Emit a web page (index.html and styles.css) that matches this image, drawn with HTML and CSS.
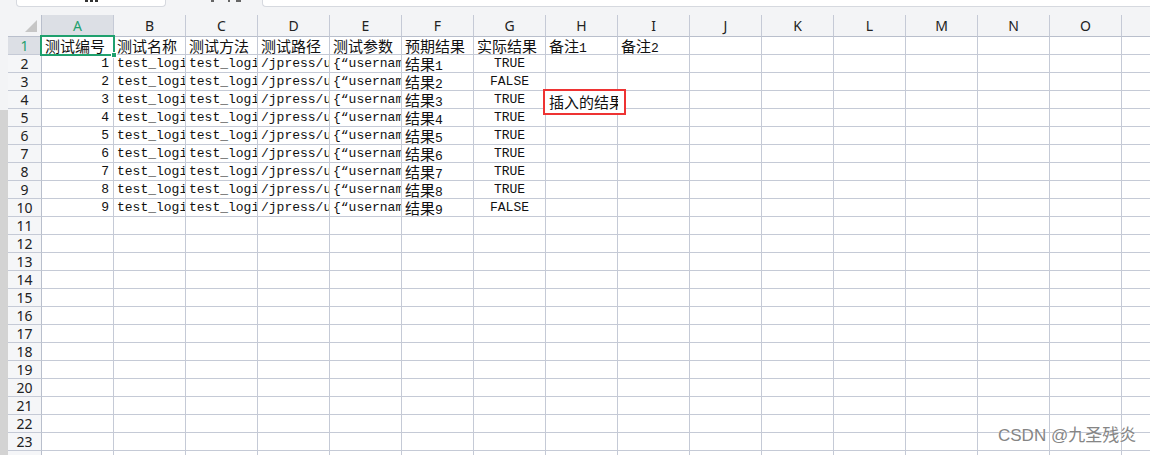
FILE: index.html
```html
<!DOCTYPE html>
<html lang="zh">
<head>
<meta charset="utf-8">
<title>Sheet</title>
<link rel="stylesheet" href="styles.css">
</head>
<body>
<div class="top">
  <div class="namebox"><span class="dot"></span><span class="dot"></span><span class="dot"></span></div>
  <div class="fxarea"><span class="mk mk1"></span><span class="mk mk2"></span><span class="mk mk3"></span></div>
  <div class="formula"></div>
</div>
<div class="main">
  <div class="strip"></div>
  <div class="sheet">
    <div class="gap"></div>
    <div class="row head">
      <div class="rh corner"><span class="tri"></span></div>
      <div class="ch sel">A</div><div class="ch">B</div><div class="ch">C</div><div class="ch">D</div><div class="ch">E</div><div class="ch">F</div><div class="ch">G</div><div class="ch">H</div><div class="ch">I</div><div class="ch">J</div><div class="ch">K</div><div class="ch">L</div><div class="ch">M</div><div class="ch">N</div><div class="ch">O</div><div class="ch fill"></div>
    </div>
    <div class="row">
      <div class="rh sel">1</div>
      <div class="c zh active">测试编号<span class="handle"></span></div><div class="c zh">测试名称</div><div class="c zh">测试方法</div><div class="c zh">测试路径</div><div class="c zh">测试参数</div><div class="c zh">预期结果</div><div class="c zh">实际结果</div><div class="c"><span class="zh">备注</span>1</div><div class="c"><span class="zh">备注</span>2</div><div class="c"></div><div class="c"></div><div class="c"></div><div class="c"></div><div class="c"></div><div class="c"></div><div class="c fill"></div>
    </div>
    <div class="row">
      <div class="rh">2</div>
      <div class="c r">1</div><div class="c">test_login</div><div class="c">test_login</div><div class="c">/jpress/user</div><div class="c">{“username”</div><div class="c"><span class="zh">结果</span>1</div><div class="c m">TRUE</div><div class="c"></div><div class="c"></div><div class="c"></div><div class="c"></div><div class="c"></div><div class="c"></div><div class="c"></div><div class="c"></div><div class="c fill"></div>
    </div>
    <div class="row">
      <div class="rh">3</div>
      <div class="c r">2</div><div class="c">test_login</div><div class="c">test_login</div><div class="c">/jpress/user</div><div class="c">{“username”</div><div class="c"><span class="zh">结果</span>2</div><div class="c m">FALSE</div><div class="c"></div><div class="c"></div><div class="c"></div><div class="c"></div><div class="c"></div><div class="c"></div><div class="c"></div><div class="c"></div><div class="c fill"></div>
    </div>
    <div class="row">
      <div class="rh">4</div>
      <div class="c r">3</div><div class="c">test_login</div><div class="c">test_login</div><div class="c">/jpress/user</div><div class="c">{“username”</div><div class="c"><span class="zh">结果</span>3</div><div class="c m">TRUE</div><div class="c note-cell"><div class="note"><span class="note-text">插入的结果</span></div></div><div class="c"></div><div class="c"></div><div class="c"></div><div class="c"></div><div class="c"></div><div class="c"></div><div class="c"></div><div class="c fill"></div>
    </div>
    <div class="row">
      <div class="rh">5</div>
      <div class="c r">4</div><div class="c">test_login</div><div class="c">test_login</div><div class="c">/jpress/user</div><div class="c">{“username”</div><div class="c"><span class="zh">结果</span>4</div><div class="c m">TRUE</div><div class="c"></div><div class="c"></div><div class="c"></div><div class="c"></div><div class="c"></div><div class="c"></div><div class="c"></div><div class="c"></div><div class="c fill"></div>
    </div>
    <div class="row">
      <div class="rh">6</div>
      <div class="c r">5</div><div class="c">test_login</div><div class="c">test_login</div><div class="c">/jpress/user</div><div class="c">{“username”</div><div class="c"><span class="zh">结果</span>5</div><div class="c m">TRUE</div><div class="c"></div><div class="c"></div><div class="c"></div><div class="c"></div><div class="c"></div><div class="c"></div><div class="c"></div><div class="c"></div><div class="c fill"></div>
    </div>
    <div class="row">
      <div class="rh">7</div>
      <div class="c r">6</div><div class="c">test_login</div><div class="c">test_login</div><div class="c">/jpress/user</div><div class="c">{“username”</div><div class="c"><span class="zh">结果</span>6</div><div class="c m">TRUE</div><div class="c"></div><div class="c"></div><div class="c"></div><div class="c"></div><div class="c"></div><div class="c"></div><div class="c"></div><div class="c"></div><div class="c fill"></div>
    </div>
    <div class="row">
      <div class="rh">8</div>
      <div class="c r">7</div><div class="c">test_login</div><div class="c">test_login</div><div class="c">/jpress/user</div><div class="c">{“username”</div><div class="c"><span class="zh">结果</span>7</div><div class="c m">TRUE</div><div class="c"></div><div class="c"></div><div class="c"></div><div class="c"></div><div class="c"></div><div class="c"></div><div class="c"></div><div class="c"></div><div class="c fill"></div>
    </div>
    <div class="row">
      <div class="rh">9</div>
      <div class="c r">8</div><div class="c">test_login</div><div class="c">test_login</div><div class="c">/jpress/user</div><div class="c">{“username”</div><div class="c"><span class="zh">结果</span>8</div><div class="c m">TRUE</div><div class="c"></div><div class="c"></div><div class="c"></div><div class="c"></div><div class="c"></div><div class="c"></div><div class="c"></div><div class="c"></div><div class="c fill"></div>
    </div>
    <div class="row">
      <div class="rh">10</div>
      <div class="c r">9</div><div class="c">test_login</div><div class="c">test_login</div><div class="c">/jpress/user</div><div class="c">{“username”</div><div class="c"><span class="zh">结果</span>9</div><div class="c m">FALSE</div><div class="c"></div><div class="c"></div><div class="c"></div><div class="c"></div><div class="c"></div><div class="c"></div><div class="c"></div><div class="c"></div><div class="c fill"></div>
    </div>
    <div class="row"><div class="rh">11</div><div class="c"></div><div class="c"></div><div class="c"></div><div class="c"></div><div class="c"></div><div class="c"></div><div class="c"></div><div class="c"></div><div class="c"></div><div class="c"></div><div class="c"></div><div class="c"></div><div class="c"></div><div class="c"></div><div class="c"></div><div class="c fill"></div></div>
    <div class="row"><div class="rh">12</div><div class="c"></div><div class="c"></div><div class="c"></div><div class="c"></div><div class="c"></div><div class="c"></div><div class="c"></div><div class="c"></div><div class="c"></div><div class="c"></div><div class="c"></div><div class="c"></div><div class="c"></div><div class="c"></div><div class="c"></div><div class="c fill"></div></div>
    <div class="row"><div class="rh">13</div><div class="c"></div><div class="c"></div><div class="c"></div><div class="c"></div><div class="c"></div><div class="c"></div><div class="c"></div><div class="c"></div><div class="c"></div><div class="c"></div><div class="c"></div><div class="c"></div><div class="c"></div><div class="c"></div><div class="c"></div><div class="c fill"></div></div>
    <div class="row"><div class="rh">14</div><div class="c"></div><div class="c"></div><div class="c"></div><div class="c"></div><div class="c"></div><div class="c"></div><div class="c"></div><div class="c"></div><div class="c"></div><div class="c"></div><div class="c"></div><div class="c"></div><div class="c"></div><div class="c"></div><div class="c"></div><div class="c fill"></div></div>
    <div class="row"><div class="rh">15</div><div class="c"></div><div class="c"></div><div class="c"></div><div class="c"></div><div class="c"></div><div class="c"></div><div class="c"></div><div class="c"></div><div class="c"></div><div class="c"></div><div class="c"></div><div class="c"></div><div class="c"></div><div class="c"></div><div class="c"></div><div class="c fill"></div></div>
    <div class="row"><div class="rh">16</div><div class="c"></div><div class="c"></div><div class="c"></div><div class="c"></div><div class="c"></div><div class="c"></div><div class="c"></div><div class="c"></div><div class="c"></div><div class="c"></div><div class="c"></div><div class="c"></div><div class="c"></div><div class="c"></div><div class="c"></div><div class="c fill"></div></div>
    <div class="row"><div class="rh">17</div><div class="c"></div><div class="c"></div><div class="c"></div><div class="c"></div><div class="c"></div><div class="c"></div><div class="c"></div><div class="c"></div><div class="c"></div><div class="c"></div><div class="c"></div><div class="c"></div><div class="c"></div><div class="c"></div><div class="c"></div><div class="c fill"></div></div>
    <div class="row"><div class="rh">18</div><div class="c"></div><div class="c"></div><div class="c"></div><div class="c"></div><div class="c"></div><div class="c"></div><div class="c"></div><div class="c"></div><div class="c"></div><div class="c"></div><div class="c"></div><div class="c"></div><div class="c"></div><div class="c"></div><div class="c"></div><div class="c fill"></div></div>
    <div class="row"><div class="rh">19</div><div class="c"></div><div class="c"></div><div class="c"></div><div class="c"></div><div class="c"></div><div class="c"></div><div class="c"></div><div class="c"></div><div class="c"></div><div class="c"></div><div class="c"></div><div class="c"></div><div class="c"></div><div class="c"></div><div class="c"></div><div class="c fill"></div></div>
    <div class="row"><div class="rh">20</div><div class="c"></div><div class="c"></div><div class="c"></div><div class="c"></div><div class="c"></div><div class="c"></div><div class="c"></div><div class="c"></div><div class="c"></div><div class="c"></div><div class="c"></div><div class="c"></div><div class="c"></div><div class="c"></div><div class="c"></div><div class="c fill"></div></div>
    <div class="row"><div class="rh">21</div><div class="c"></div><div class="c"></div><div class="c"></div><div class="c"></div><div class="c"></div><div class="c"></div><div class="c"></div><div class="c"></div><div class="c"></div><div class="c"></div><div class="c"></div><div class="c"></div><div class="c"></div><div class="c"></div><div class="c"></div><div class="c fill"></div></div>
    <div class="row"><div class="rh">22</div><div class="c"></div><div class="c"></div><div class="c"></div><div class="c"></div><div class="c"></div><div class="c"></div><div class="c"></div><div class="c"></div><div class="c"></div><div class="c"></div><div class="c"></div><div class="c"></div><div class="c"></div><div class="c"></div><div class="c"></div><div class="c fill"></div></div>
    <div class="row"><div class="rh">23</div><div class="c"></div><div class="c"></div><div class="c"></div><div class="c"></div><div class="c"></div><div class="c"></div><div class="c"></div><div class="c"></div><div class="c"></div><div class="c"></div><div class="c"></div><div class="c"></div><div class="c"></div><div class="c"></div><div class="c"></div><div class="c fill"></div></div>
    <div class="row"><div class="rh">24</div><div class="c"></div><div class="c"></div><div class="c"></div><div class="c"></div><div class="c"></div><div class="c"></div><div class="c"></div><div class="c"></div><div class="c"></div><div class="c"></div><div class="c"></div><div class="c"></div><div class="c"></div><div class="c"></div><div class="c"></div><div class="c fill"></div></div>
  </div>
</div>
<div class="watermark">CSDN @九圣残炎</div>
</body>
</html>
```

FILE: styles.css
```css
* { box-sizing: border-box; }
html, body { margin: 0; padding: 0; }
body {
  width: 1150px;
  height: 455px;
  overflow: hidden;
  background: #ffffff;
  position: relative;
  font-family: "Liberation Mono", "Noto Sans CJK SC", monospace;
}

/* top formula bar remnants */
.top {
  height: 7px;
  background: #f3f4f6;
  display: flex;
  align-items: stretch;
}
.namebox {
  margin-left: 16px;
  width: 150px;
  background: #ffffff;
  border: 1px solid #d6d9df;
  border-top: none;
  border-radius: 0 0 4px 4px;
  display: flex;
  justify-content: center;
  gap: 2px;
}
.dot {
  width: 3px;
  height: 2px;
  background: #333;
}
.fxarea {
  width: 96px;
  position: relative;
}
.mk { position: absolute; top: 0; height: 2px; background: #666; }
.mk1 { left: 45px; width: 3px; }
.mk2 { left: 62px; width: 2px; }
.mk3 { left: 70px; width: 5px; }
.formula {
  flex: 1;
  background: #ffffff;
  border: 1px solid #d6d9df;
  border-top: none;
  border-right: none;
  border-radius: 0 0 0 4px;
}

.main {
  display: flex;
}
.strip {
  width: 8px;
  flex: none;
  background: linear-gradient(#f3f4f6 0, #f3f4f6 103px, #d3d3d3 103px);
}
.sheet {
  flex: 1;
  min-width: 0;
}
.gap {
  height: 8px;
  background: #f3f4f6;
}

.row {
  display: grid;
  grid-template-columns: 34px repeat(15, 72px) 1fr;
  height: 18px;
}
.row.head { height: 22px; }

.rh {
  background: #f5f6f8;
  border-right: 1px solid #b9bfcc;
  border-bottom: 1px solid #c5cad6;
  font-family: "Noto Sans", "Open Sans", sans-serif;
  font-size: 14px;
  line-height: 17px;
  color: #222;
  text-align: center;
}
.rh.sel {
  background: #dcdfe5;
  color: #1fa06e;
}
.corner {
  position: relative;
  background: #f3f4f6;
  border-bottom: 1px solid #b9bfcc;
}
.tri {
  position: absolute;
  left: 17px;
  top: 5px;
  width: 12px;
  height: 12px;
  background: #c6c6c6;
  clip-path: polygon(100% 0, 100% 100%, 0 100%);
}

.ch {
  background: #f3f4f6;
  border-right: 1px solid #c5cad6;
  border-bottom: 1px solid #b9bfcc;
  font-family: "Noto Sans", "Open Sans", sans-serif;
  font-size: 14px;
  line-height: 21px;
  color: #222;
  text-align: center;
}
.ch.sel {
  background: #dcdfe5;
  color: #1fa06e;
}
.ch.fill { border-right: none; }

.c {
  position: relative;
  border-right: 1px solid #c5cad6;
  border-bottom: 1px solid #c5cad6;
  font-size: 13px;
  line-height: 17px;
  color: #111;
  padding: 0 3px;
  white-space: nowrap;
  overflow: hidden;
}
.c.fill { border-right: none; }
.zh {
  font-family: "Noto Sans CJK SC", sans-serif;
  font-size: 15px;
  line-height: 17px;
}
.c.r { text-align: right; padding-right: 4px; }
.c.m { text-align: center; }

.c.active {
  overflow: visible;
  z-index: 2;
}
.c.active::after {
  content: "";
  position: absolute;
  left: -2px;
  top: -2px;
  right: -2px;
  bottom: -2px;
  border: 2px solid #1fa06e;
  pointer-events: none;
}
.handle {
  position: absolute;
  right: -4px;
  bottom: -4px;
  width: 6px;
  height: 6px;
  background: #1fa06e;
  border: 1px solid #ffffff;
  z-index: 3;
}

.note-cell {
  overflow: visible;
  z-index: 2;
}
.note {
  position: absolute;
  left: -3px;
  top: -2px;
  width: 83px;
  height: 26px;
  border: 2px solid #ee3333;
  background: #ffffff;
  padding: 2px 0 0 4px;
}
.note-text {
  display: inline-block;
  width: 69px;
  overflow: hidden;
  white-space: nowrap;
  font-family: "Noto Sans CJK SC", sans-serif;
  font-size: 15px;
  line-height: 18px;
  color: #111;
}

.watermark {
  position: absolute;
  left: 998px;
  top: 426px;
  font-family: "Liberation Sans", "Noto Sans CJK SC", sans-serif;
  font-size: 17px;
  line-height: 20px;
  color: #858585;
  text-shadow: 0 0 1px #ffffff;
  white-space: nowrap;
}
```
